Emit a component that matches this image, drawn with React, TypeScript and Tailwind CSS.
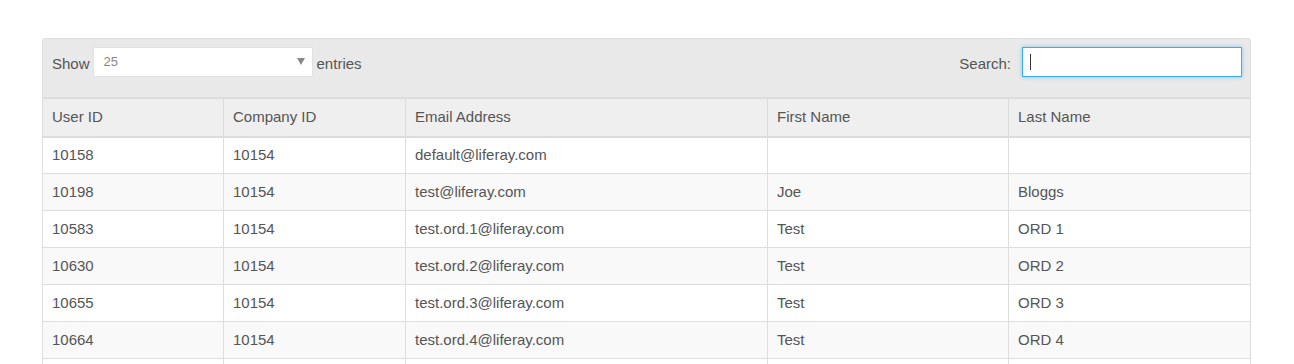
import React from "react";

type Row = {
  userId: string;
  companyId: string;
  email: string;
  firstName: string;
  lastName: string;
};

const rows: Row[] = [
  { userId: "10158", companyId: "10154", email: "default@liferay.com", firstName: "", lastName: "" },
  { userId: "10198", companyId: "10154", email: "test@liferay.com", firstName: "Joe", lastName: "Bloggs" },
  { userId: "10583", companyId: "10154", email: "test.ord.1@liferay.com", firstName: "Test", lastName: "ORD 1" },
  { userId: "10630", companyId: "10154", email: "test.ord.2@liferay.com", firstName: "Test", lastName: "ORD 2" },
  { userId: "10655", companyId: "10154", email: "test.ord.3@liferay.com", firstName: "Test", lastName: "ORD 3" },
  { userId: "10664", companyId: "10154", email: "test.ord.4@liferay.com", firstName: "Test", lastName: "ORD 4" },
  { userId: "10673", companyId: "10154", email: "test.ord.5@liferay.com", firstName: "Test", lastName: "ORD 5" },
  { userId: "10682", companyId: "10154", email: "test.ord.6@liferay.com", firstName: "Test", lastName: "ORD 6" },
];

const columns = [
  { label: "User ID", width: "w-[181px]" },
  { label: "Company ID", width: "w-[182px]" },
  { label: "Email Address", width: "w-[362px]" },
  { label: "First Name", width: "w-[241px]" },
  { label: "Last Name", width: "w-[242px]" },
];

export default function App() {
  return (
    <div className="min-h-screen bg-white font-['Liberation_Sans',Arial,sans-serif] text-[15px] text-[#555]">
      <div className="ml-[42px] w-[1209px] pt-[38px]">
        {/* Toolbar */}
        <div className="flex h-[60px] items-start justify-between rounded-t-[3px] border border-[#dedede] bg-[#e9e9e9] pl-[9px] pr-[8px] pt-[8px]">
          <div className="flex h-[30px] items-center gap-[3px]">
            <span className="pt-[4px]">Show</span>
            <div className="relative flex h-[30px] w-[220px] items-center border border-[#e2e2e2] bg-white pl-[10px] text-[13px] text-[#888]">
              25
              <span className="absolute right-[7px] top-[10px] h-0 w-0 border-x-[4px] border-t-[7px] border-x-transparent border-t-[#888]" />
            </div>
            <span className="pl-[1px] pt-[4px]">entries</span>
          </div>
          <div className="flex h-[30px] items-center gap-[11px]">
            <span className="pt-[4px]">Search:</span>
            <div className="flex h-[30px] w-[220px] items-center border border-[#3aaef0] bg-white pl-[7px] shadow-[0_0_4px_rgba(58,174,240,0.6)]">
              <span className="h-[16px] w-px bg-[#333]" />
            </div>
          </div>
        </div>

        {/* Table */}
        <table className="w-[1208px] table-fixed border-collapse">
          <thead>
            <tr className="bg-[#efefef]">
              {columns.map((c) => (
                <th
                  key={c.label}
                  className={`${c.width} h-[38px] border border-b-2 border-[#dcdcdc] px-[9px] text-left font-normal`}
                >
                  {c.label}
                </th>
              ))}
            </tr>
          </thead>
          <tbody>
            {rows.map((r, i) => (
              <tr key={r.userId} className={i % 2 === 1 ? "bg-[#f9f9f9]" : "bg-white"}>
                {[r.userId, r.companyId, r.email, r.firstName, r.lastName].map((v, j) => (
                  <td key={j} className="h-[37px] border border-[#dddddd] px-[9px]">
                    {v}
                  </td>
                ))}
              </tr>
            ))}
          </tbody>
        </table>
      </div>
    </div>
  );
}
